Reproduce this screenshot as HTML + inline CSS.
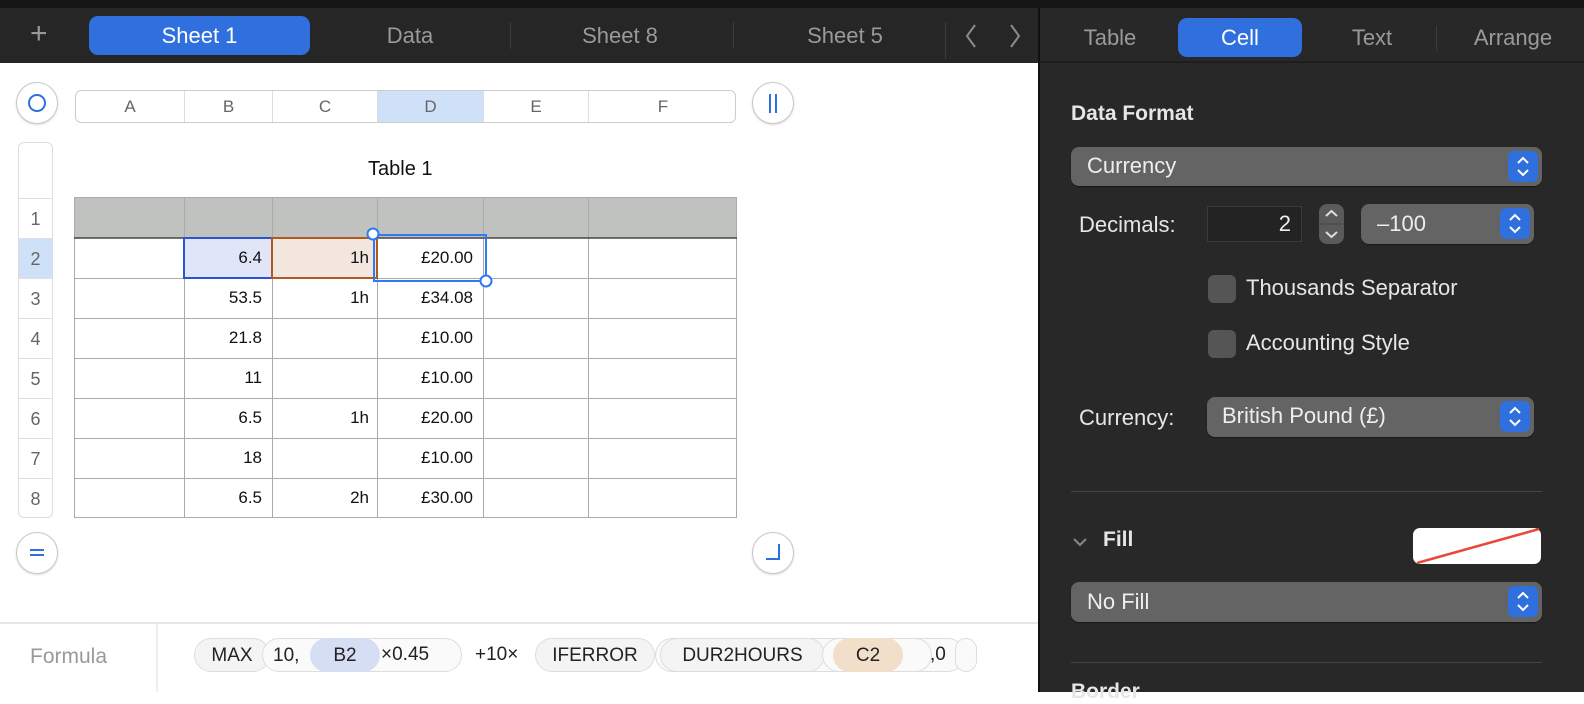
<!DOCTYPE html>
<html><head><meta charset="utf-8"><style>
*{box-sizing:border-box;margin:0;padding:0}
body{width:1584px;height:692px;overflow:hidden;background:#fff;font-family:"Liberation Sans",sans-serif;position:relative}
.a{position:absolute}
.topbar{left:0;top:0;width:1584px;height:63px;background:#262626;border-top:8px solid #161616}
.tab{color:#9a9a9a;font-size:22px;text-align:center;line-height:39px}
.sel{background:#2f6fde;color:#fff;border-radius:9px}
.vd{width:1px;background:#3c3c3c}
.panel{left:1038px;top:8px;width:546px;height:684px;background:#282828;border-left:2px solid #111}
.colh{left:75px;top:90px;width:661px;height:33px;border:1px solid #ccc;border-radius:6px;overflow:hidden;background:#fff}
.colh div{position:absolute;top:0;height:31px;line-height:31px;text-align:center;color:#666;font-size:17px;border-right:1px solid #ddd}
.circ{width:42px;height:42px;border-radius:50%;border:1px solid #c8c8c8;background:#fff;box-shadow:0 1px 2px rgba(0,0,0,.15)}
.rows{left:18px;top:142px;width:35px;height:376px;border:1px solid #ddd;border-radius:6px;overflow:hidden}
.rows div{position:absolute;left:0;width:33px;height:40px;line-height:40px;text-align:center;color:#666;font-size:18px;border-top:1px solid #e0e0e0}
.cell{position:relative;text-align:right;padding-right:10px;font-size:17px;line-height:40px;color:#111}
.pop{background:#646464;border-radius:8px;color:#eee;font-size:22px;box-shadow:0 1px 1px rgba(0,0,0,.4)}
.arr{position:absolute;right:4px;top:4px;width:30px;height:31px;background:#2f6fde;border-radius:6px}
.arr svg{position:absolute;left:0;top:0}
.lbl{color:#e6e6e6;font-size:22px}
.cb{width:28px;height:28px;background:#555;border-radius:6px}
.tok{position:absolute;top:638px;height:34px;line-height:34px;font-size:19px;color:#222;border-radius:17px;border:1px solid #ddd;background:#f4f4f4;text-align:center}
</style></head><body>
<div class="a topbar"></div>
<div class="a" style="left:30px;top:16px;color:#999;font-size:30px;line-height:36px;font-weight:300">+</div>
<div class="a tab sel" style="left:89px;top:16px;width:221px">Sheet 1</div>
<div class="a tab" style="left:330px;top:16px;width:160px">Data</div>
<div class="a vd" style="left:510px;top:22px;height:27px"></div>
<div class="a tab" style="left:540px;top:16px;width:160px">Sheet 8</div>
<div class="a vd" style="left:733px;top:22px;height:27px"></div>
<div class="a tab" style="left:765px;top:16px;width:160px">Sheet 5</div>
<div class="a vd" style="left:945px;top:22px;height:37px"></div>
<svg class="a" style="left:955px;top:20px" width="75" height="32"><path d="M20 5 L12 16 L20 27 M56 5 L64 16 L56 27" stroke="#8a8a8a" stroke-width="2" fill="none"/></svg>

<div class="a circ" style="left:16px;top:82px"><div class="a" style="left:11px;top:11px;width:18px;height:18px;border:2px solid #2f6fde;border-radius:50%"></div></div>
<div class="a colh">
<div style="left:0;width:109px">A</div><div style="left:109px;width:88px">B</div><div style="left:197px;width:105px">C</div><div style="left:302px;width:106px;background:#cfe1f9">D</div><div style="left:408px;width:105px">E</div><div style="left:513px;width:148px;border:0">F</div></div>
<div class="a circ" style="left:752px;top:82px"><div class="a" style="left:16px;top:11px;width:8px;height:19px;border-left:2px solid #2f6fde;border-right:2px solid #2f6fde"></div></div>
<div class="a" style="left:368px;top:158px;font-size:20px;color:#111">Table 1</div>
<div class="a rows">
<div style="top:55px;border-top:1px solid #e0e0e0">1</div><div style="top:95px;background:#cfe1f9">2</div><div style="top:135px">3</div><div style="top:175px">4</div><div style="top:215px">5</div><div style="top:255px">6</div><div style="top:295px">7</div><div style="top:335px">8</div></div>

<svg class="a" style="left:74px;top:197px" width="664" height="322">
<rect x="1" y="1" width="661" height="40" fill="#c0c2c0"/>
<rect x="110" y="41" width="88" height="40" fill="#e0e6f8"/>
<rect x="198" y="41" width="105" height="40" fill="#f2e6de"/>
<g stroke="#aaa" stroke-width="1">
<line x1="0.5" y1="0" x2="0.5" y2="320"/><line x1="110.5" y1="0" x2="110.5" y2="320"/><line x1="198.5" y1="0" x2="198.5" y2="320"/><line x1="303.5" y1="0" x2="303.5" y2="320"/><line x1="409.5" y1="0" x2="409.5" y2="320"/><line x1="514.5" y1="0" x2="514.5" y2="320"/><line x1="662.5" y1="0" x2="662.5" y2="320"/>
<line x1="0" y1="0.5" x2="663" y2="0.5"/><line x1="0" y1="81.5" x2="663" y2="81.5"/><line x1="0" y1="121.5" x2="663" y2="121.5"/><line x1="0" y1="161.5" x2="663" y2="161.5"/><line x1="0" y1="201.5" x2="663" y2="201.5"/><line x1="0" y1="241.5" x2="663" y2="241.5"/><line x1="0" y1="281.5" x2="663" y2="281.5"/><line x1="0" y1="320.5" x2="663" y2="320.5"/>
</g>
<line x1="0" y1="41" x2="663" y2="41" stroke="#444" stroke-width="1.5"/>
<rect x="110" y="41" width="88" height="40" fill="none" stroke="#2a55d6" stroke-width="2"/>
<rect x="198" y="41" width="105" height="40" fill="none" stroke="#b05a20" stroke-width="2"/>
<rect x="300" y="38" width="112" height="46" fill="none" stroke="#2f7af0" stroke-width="2"/>
<circle cx="299" cy="37" r="5.5" fill="#fff" stroke="#2f7af0" stroke-width="2"/>
<circle cx="412" cy="84" r="5.5" fill="#fff" stroke="#2f7af0" stroke-width="2"/>
</svg>
<div class="a" style="left:184px;top:238px;width:88px"><div class="cell">6.4</div><div class="cell">53.5</div><div class="cell">21.8</div><div class="cell">11</div><div class="cell">6.5</div><div class="cell">18</div><div class="cell">6.5</div></div>
<div class="a" style="left:272px;top:238px;width:105px"><div class="cell" style="padding-right:8px">1h</div><div class="cell" style="padding-right:8px">1h</div><div class="cell">&nbsp;</div><div class="cell">&nbsp;</div><div class="cell" style="padding-right:8px">1h</div><div class="cell">&nbsp;</div><div class="cell" style="padding-right:8px">2h</div></div>
<div class="a" style="left:377px;top:238px;width:106px"><div class="cell">£20.00</div><div class="cell">£34.08</div><div class="cell">£10.00</div><div class="cell">£10.00</div><div class="cell">£20.00</div><div class="cell">£10.00</div><div class="cell">£30.00</div></div>

<div class="a circ" style="left:16px;top:532px"><div class="a" style="left:13px;top:16px;width:14px;height:7px;border-top:2px solid #2f6fde;border-bottom:2px solid #2f6fde"></div></div>
<div class="a circ" style="left:752px;top:532px"><div class="a" style="left:13px;top:11px;width:14px;height:16px;border-right:2px solid #2f6fde;border-bottom:2px solid #2f6fde"></div></div>

<div class="a" style="left:0;top:622px;width:1038px;height:70px;border-top:2px solid #e6e6e6;background:#fff"></div>
<div class="a" style="left:156px;top:624px;width:2px;height:68px;background:#eee"></div>
<div class="a" style="left:30px;top:645px;font-size:21px;color:#999">Formula</div>
<div class="tok" style="left:194px;width:76px">MAX</div>
<div class="tok" style="left:262px;width:200px;background:#fafafa;text-align:left;padding-left:10px">10,</div>
<div class="tok" style="left:310px;width:70px;background:#d5def4;border-color:#d5def4">B2</div>
<div class="a" style="left:381px;top:638px;line-height:34px;font-size:19px;color:#222">×0.45</div>
<div class="a" style="left:475px;top:638px;line-height:34px;font-size:19px;color:#222">+10×</div>
<div class="tok" style="left:535px;width:120px">IFERROR</div>
<div class="tok" style="left:655px;width:310px;background:#fafafa"></div>
<div class="tok" style="left:660px;width:165px">DUR2HOURS</div>
<div class="tok" style="left:822px;width:110px;background:#fafafa"></div>
<div class="tok" style="left:833px;width:70px;background:#f1dfca;border-color:#f1dfca">C2</div>
<div class="a" style="left:930px;top:638px;line-height:34px;font-size:19px;color:#222">,0</div>
<div class="tok" style="left:955px;width:22px;background:#fafafa"></div>

<div class="a panel">
<div class="a" style="left:0;top:53px;width:546px;height:2px;background:#1e1e1e"></div>
<div class="a tab" style="left:20px;top:10px;width:100px">Table</div>
<div class="a tab sel" style="left:138px;top:10px;width:124px">Cell</div>
<div class="a tab" style="left:282px;top:10px;width:100px">Text</div>
<div class="a vd" style="left:396px;top:18px;height:25px"></div>
<div class="a tab" style="left:410px;top:10px;width:126px">Arrange</div>
<div class="a lbl" style="left:31px;top:94px;font-weight:bold;font-size:21px">Data Format</div>
<div class="a pop" style="left:31px;top:139px;width:471px;height:39px;line-height:38px;padding-left:16px">Currency<div class="arr"><svg width="30" height="31"><path d="M10 12 L15 7 L20 12 M10 19 L15 24 L20 19" stroke="#fff" stroke-width="2" fill="none"/></svg></div></div>
<div class="a lbl" style="left:39px;top:204px">Decimals:</div>
<div class="a" style="left:167px;top:198px;width:95px;height:36px;background:#232323;border:1px solid #3a3a3a;color:#eee;font-size:22px;text-align:right;padding-right:10px;line-height:34px">2</div>
<div class="a" style="left:279px;top:196px;width:25px;height:40px;background:#5a5a5a;border-radius:8px"><svg width="25" height="40"><path d="M7 12 L12.5 7 L18 12 M7 28 L12.5 33 L18 28" stroke="#ddd" stroke-width="2" fill="none"/><line x1="0" y1="20" x2="25" y2="20" stroke="#444"/></svg></div>
<div class="a pop" style="left:321px;top:196px;width:173px;height:40px;line-height:40px;padding-left:16px">–100<div class="arr"><svg width="30" height="31"><path d="M10 12 L15 7 L20 12 M10 19 L15 24 L20 19" stroke="#fff" stroke-width="2" fill="none"/></svg></div></div>
<div class="a cb" style="left:168px;top:267px"></div>
<div class="a lbl" style="left:206px;top:267px">Thousands Separator</div>
<div class="a cb" style="left:168px;top:322px"></div>
<div class="a lbl" style="left:206px;top:322px">Accounting Style</div>
<div class="a lbl" style="left:39px;top:397px">Currency:</div>
<div class="a pop" style="left:167px;top:389px;width:327px;height:40px;line-height:38px;padding-left:15px">British Pound (£)<div class="arr"><svg width="30" height="31"><path d="M10 12 L15 7 L20 12 M10 19 L15 24 L20 19" stroke="#fff" stroke-width="2" fill="none"/></svg></div></div>
<div class="a" style="left:31px;top:483px;width:471px;height:1px;background:#444"></div>
<svg class="a" style="left:32px;top:528px" width="16" height="12"><path d="M2 3 L8 9 L14 3" stroke="#888" stroke-width="2" fill="none"/></svg>
<div class="a lbl" style="left:63px;top:520px;font-weight:bold;font-size:21px">Fill</div>
<svg class="a" style="left:373px;top:520px" width="128" height="36"><rect width="128" height="36" rx="7" fill="#fff"/><line x1="4" y1="35" x2="126" y2="1" stroke="#e8473a" stroke-width="2.5"/></svg>
<div class="a pop" style="left:31px;top:574px;width:471px;height:40px;line-height:40px;padding-left:16px">No Fill<div class="arr"><svg width="30" height="31"><path d="M10 12 L15 7 L20 12 M10 19 L15 24 L20 19" stroke="#fff" stroke-width="2" fill="none"/></svg></div></div>
<div class="a" style="left:31px;top:654px;width:471px;height:1px;background:#444"></div>
<div class="a lbl" style="left:31px;top:672px;font-weight:bold;font-size:21px">Border</div>
</div>
</body></html>
